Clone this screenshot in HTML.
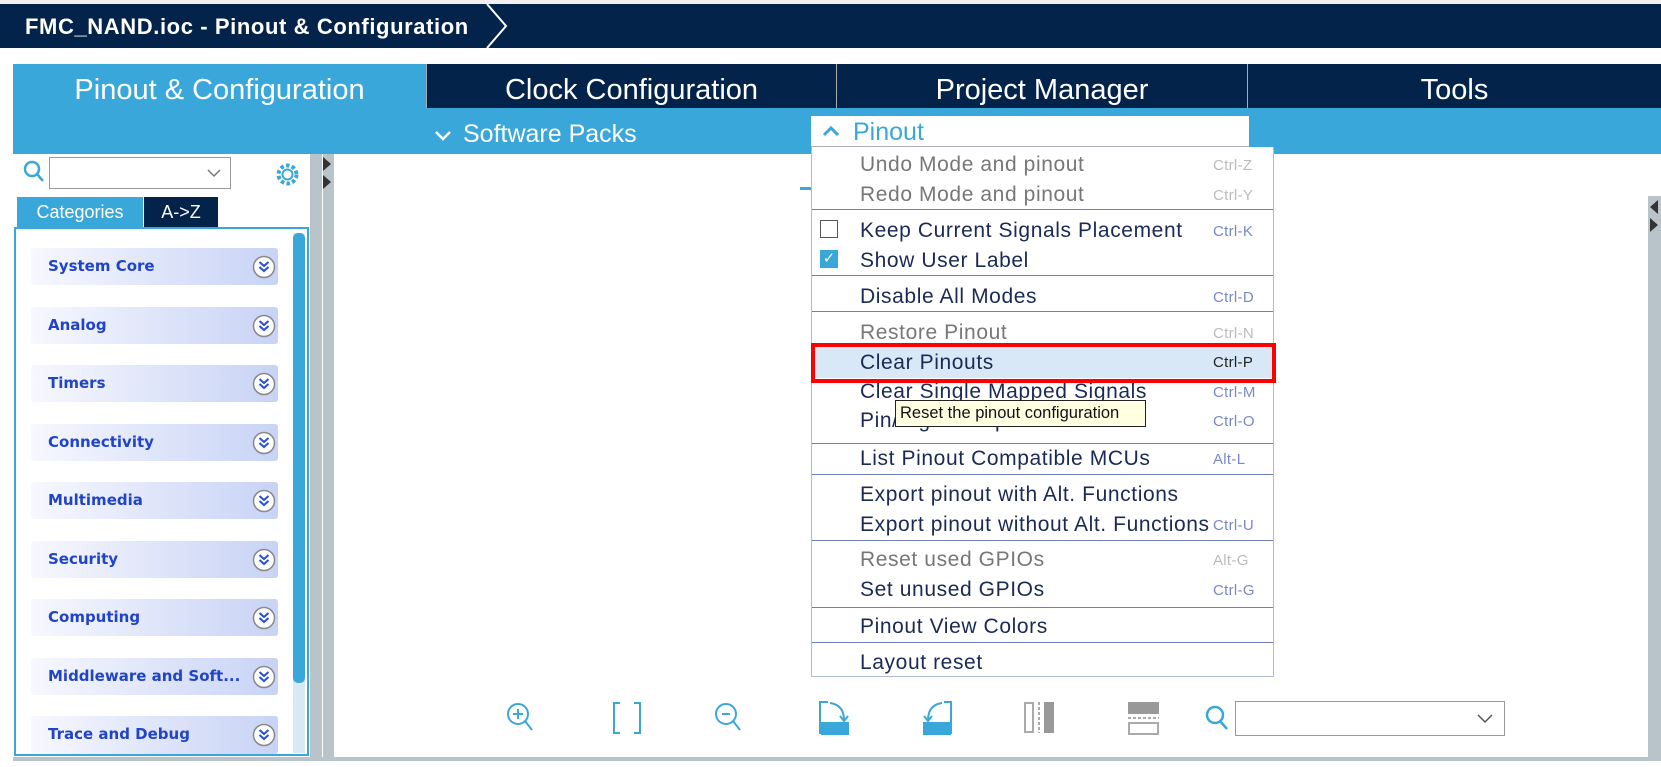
<!DOCTYPE html>
<html><head><style>
*{margin:0;padding:0;box-sizing:border-box}
body{width:1661px;height:767px;background:#fff;position:relative;overflow:hidden;font-family:"Liberation Sans",Arial,sans-serif}
.a{position:absolute}
.tab{position:absolute;top:64px;height:44px;color:#fff;font-size:29px;text-align:center;line-height:52px;background:#03234b}
.cat{position:absolute;left:31px;width:247px;height:37px;border-radius:3px;background:linear-gradient(90deg,#f7f8fe,#c8d3f5);font-family:"DejaVu Sans",sans-serif;font-weight:bold;font-size:15px;color:#2143c8;line-height:37px;padding-left:17px}
.cat svg{position:absolute;left:221px;top:7px}
.mi{position:absolute;left:860px;font-size:21px;letter-spacing:0.6px;color:#1b2a55;}
.g{color:#777}
.sc{position:absolute;left:1213px;font-size:15px;letter-spacing:0.3px;color:#7a88c8}
.sep{position:absolute;left:812px;width:461px;height:1px;background:#6f82b8}
</style></head><body>
<svg width="0" height="0" style="position:absolute"><defs><g id="dc"><circle cx="12" cy="12" r="10.5" stroke="#888" stroke-width="1.5" fill="#fff"/><path d="M7.5 7 L12 11 L16.5 7 M7.5 12 L12 16 L16.5 12" stroke="#2a4fd0" stroke-width="2" fill="none"/></g></defs></svg>
<div class="a" style="left:0;top:0;width:1661px;height:4px;background:#f0f0f0"></div>
<div class="a" style="left:0;top:4px;width:1661px;height:44px;background:#03234b"></div>
<div class="a" style="left:25px;top:14px;color:#fff;font-weight:bold;font-size:22px;letter-spacing:0.6px">FMC_NAND.ioc - Pinout &amp; Configuration</div>
<svg class="a" style="left:484px;top:4px" width="30" height="44"><path d="M3 0 L22 22 L3 44" stroke="#fff" stroke-width="2" fill="none"/></svg>
<div class="a" style="left:13px;top:64px;width:1648px;height:90px;background:#3aa7db"></div>
<div class="tab" style="left:13px;width:413px;background:#3aa7db">Pinout &amp; Configuration</div>
<div class="tab" style="left:426px;width:410px;border-left:1px solid #aaa">Clock Configuration</div>
<div class="tab" style="left:836px;width:411px;border-left:1px solid #aaa">Project Manager</div>
<div class="tab" style="left:1247px;width:414px;border-left:1px solid #aaa">Tools</div>
<svg class="a" style="left:434px;top:130px" width="18" height="12"><path d="M2 2 L9 9 L16 2" stroke="#fff" stroke-width="2.5" fill="none"/></svg>
<div class="a" style="left:463px;top:120px;color:#fff;font-size:25px">Software Packs</div>
<!-- sidebar -->
<svg class="a" style="left:23px;top:160px" width="24" height="26"><circle cx="9" cy="9" r="7" stroke="#3aa7db" stroke-width="2.5" fill="none"/><path d="M14 14 L20 21" stroke="#3aa7db" stroke-width="2.5"/></svg>
<div class="a" style="left:49px;top:157px;width:182px;height:32px;border:1px solid #999;background:#fff"></div>
<svg class="a" style="left:206px;top:168px" width="16" height="10"><path d="M2 2 L8 8 L14 2" stroke="#777" stroke-width="1.5" fill="none"/></svg>
<svg class="a" style="left:274px;top:161px" width="27" height="27"><circle cx="13.5" cy="13.5" r="9" stroke="#3aa7db" stroke-width="4" fill="none" stroke-dasharray="3.5 2.3"/><circle cx="13.5" cy="13.5" r="5" stroke="#3aa7db" stroke-width="2" fill="none"/></svg>
<div class="a" style="left:17px;top:197px;width:126px;height:30px;background:#3aa7db;color:#fff;font-size:18px;line-height:30px;text-align:center">Categories</div>
<div class="a" style="left:144px;top:197px;width:74px;height:30px;background:#03234b;color:#fff;font-size:18px;line-height:30px;text-align:center">A-&gt;Z</div>
<div class="a" style="left:14px;top:227px;width:295px;height:529px;border:2px solid #3aa7db;background:#fff"></div>
<div class="a" style="left:293px;top:233px;width:12px;height:520px;background:#d8e8f4"></div>
<div class="a" style="left:293px;top:233px;width:12px;height:450px;background:#3aa7db;border-radius:5px"></div>
<div class="cat" style="top:248px">System Core<svg width="24" height="24"><use href="#dc"/></svg></div>
<div class="cat" style="top:307px">Analog<svg width="24" height="24"><use href="#dc"/></svg></div>
<div class="cat" style="top:365px">Timers<svg width="24" height="24"><use href="#dc"/></svg></div>
<div class="cat" style="top:424px">Connectivity<svg width="24" height="24"><use href="#dc"/></svg></div>
<div class="cat" style="top:482px">Multimedia<svg width="24" height="24"><use href="#dc"/></svg></div>
<div class="cat" style="top:541px">Security<svg width="24" height="24"><use href="#dc"/></svg></div>
<div class="cat" style="top:599px">Computing<svg width="24" height="24"><use href="#dc"/></svg></div>
<div class="cat" style="top:658px">Middleware and Soft...<svg width="24" height="24"><use href="#dc"/></svg></div>
<div class="cat" style="top:716px;height:38px">Trace and Debug<svg width="24" height="24"><use href="#dc"/></svg></div>
<div class="a" style="left:310px;top:154px;width:12px;height:606px;background:#b9c4ca"></div>
<div class="a" style="left:323px;top:154px;width:11px;height:606px;background:#b9c4ca"></div>
<svg class="a" style="left:322px;top:157px" width="12" height="40"><path d="M1 0 L9 7 L1 14 Z M1 18 L9 25 L1 32 Z" fill="#333"/></svg>
<div class="a" style="left:13px;top:757px;width:1648px;height:4px;background:#b9c4ca"></div>
<div class="a" style="left:1648px;top:196px;width:13px;height:564px;background:#b9c4ca"></div>
<svg class="a" style="left:1649px;top:200px" width="12" height="40"><path d="M9 0 L1 7 L9 14 Z M1 18 L9 25 L1 32 Z" fill="#333"/></svg>
<div class="a" style="left:800px;top:187px;width:11px;height:3px;background:#3aa7db"></div>
<!-- menu -->
<div class="a" style="left:811px;top:116px;width:438px;height:31px;background:#fff;border-bottom:1px solid #aab"></div>
<svg class="a" style="left:822px;top:125px" width="18" height="12"><path d="M2 10 L9 3 L16 10" stroke="#3aa7db" stroke-width="3" fill="none"/></svg>
<div class="a" style="left:853px;top:118px;color:#3aa7db;font-size:25px">Pinout</div>
<div class="a" style="left:811px;top:147px;width:463px;height:530px;background:#fff;border:1px solid #b0bcd0;border-top:none"></div>
<div class="a" style="left:812px;top:346px;width:461px;height:32px;background:#d8e8f6"></div>
<div class="mi g" style="top:153px">Undo Mode and pinout</div><div class="sc" style="top:157px;color:#bbb">Ctrl-Z</div>
<div class="mi g" style="top:183px">Redo Mode and pinout</div><div class="sc" style="top:187px;color:#bbb">Ctrl-Y</div>
<div class="sep" style="top:209px"></div>
<div class="a" style="left:820px;top:220px;width:18px;height:18px;border:1.5px solid #555"></div>
<div class="mi" style="top:219px">Keep Current Signals Placement</div><div class="sc" style="top:223px">Ctrl-K</div>
<div class="a" style="left:820px;top:250px;width:18px;height:18px;background:#3aa7db;color:#fff;font-size:15px;text-align:center;line-height:18px">&#10003;</div>
<div class="mi" style="top:249px">Show User Label</div>
<div class="sep" style="top:275px"></div>
<div class="mi" style="top:285px">Disable All Modes</div><div class="sc" style="top:289px">Ctrl-D</div>
<div class="sep" style="top:311px"></div>
<div class="mi g" style="top:321px">Restore Pinout</div><div class="sc" style="top:325px;color:#bbb">Ctrl-N</div>
<div class="mi" style="top:351px">Clear Pinouts</div><div class="sc" style="top:354px;color:#222">Ctrl-P</div>
<div class="mi" style="top:380px">Clear Single Mapped Signals</div><div class="sc" style="top:384px">Ctrl-M</div>
<div class="mi" style="top:409px">Pin/Signals Options...</div><div class="sc" style="top:413px">Ctrl-O</div>
<div class="sep" style="top:443px"></div>
<div class="mi" style="top:447px">List Pinout Compatible MCUs</div><div class="sc" style="top:451px">Alt-L</div>
<div class="sep" style="top:474px"></div>
<div class="mi" style="top:483px">Export pinout with Alt. Functions</div>
<div class="mi" style="top:513px">Export pinout without Alt. Functions</div><div class="sc" style="top:517px">Ctrl-U</div>
<div class="sep" style="top:540px"></div>
<div class="mi g" style="top:548px">Reset used GPIOs</div><div class="sc" style="top:552px;color:#bbb">Alt-G</div>
<div class="mi" style="top:578px">Set unused GPIOs</div><div class="sc" style="top:582px">Ctrl-G</div>
<div class="sep" style="top:607px"></div>
<div class="mi" style="top:615px">Pinout View Colors</div>
<div class="sep" style="top:642px"></div>
<div class="mi" style="top:651px">Layout reset</div>
<div class="a" style="left:811px;top:343px;width:465px;height:40px;border:4px solid #f00"></div>
<div class="a" style="left:895px;top:400px;width:251px;height:27px;background:#ffffe1;border:1px solid #222;font-size:16.5px;line-height:25px;padding-left:4px;color:#111;white-space:nowrap">Reset the pinout configuration</div>
<!-- toolbar -->
<svg class="a" style="left:505px;top:700px" width="34" height="36"><circle cx="13" cy="14" r="10" stroke="#3aa7db" stroke-width="2" fill="none"/><path d="M20 21 L27 30 M13 9 V19 M8 14 H18" stroke="#3aa7db" stroke-width="2"/></svg>
<svg class="a" style="left:612px;top:702px" width="30" height="32"><path d="M8 1 H2 V31 H8 M22 1 H28 V31 H22" stroke="#3aa7db" stroke-width="2" fill="none"/></svg>
<svg class="a" style="left:713px;top:700px" width="34" height="36"><circle cx="13" cy="14" r="10" stroke="#3aa7db" stroke-width="2" fill="none"/><path d="M20 21 L27 30 M9 14 H17" stroke="#3aa7db" stroke-width="2"/></svg>
<svg class="a" style="left:818px;top:700px" width="34" height="36"><path d="M2 34 V2 H10" stroke="#3aa7db" stroke-width="2" fill="none"/><rect x="3" y="22" width="28" height="13" fill="#3aa7db"/><path d="M12 3 Q26 5 26 20 M22 16 L26 21 L30 16" stroke="#3aa7db" stroke-width="2" fill="none"/></svg>
<svg class="a" style="left:920px;top:700px" width="34" height="36"><path d="M31 34 V2 H24" stroke="#3aa7db" stroke-width="2" fill="none"/><rect x="3" y="22" width="28" height="13" fill="#3aa7db"/><path d="M22 3 Q8 5 8 20 M4 16 L8 21 L12 16" stroke="#3aa7db" stroke-width="2" fill="none"/></svg>
<svg class="a" style="left:1024px;top:702px" width="32" height="32"><rect x="1" y="1" width="8" height="29" fill="none" stroke="#aaa" stroke-width="2"/><rect x="20" y="0" width="10" height="31" fill="#999"/><path d="M15 0 V31" stroke="#aaa" stroke-width="2" stroke-dasharray="3 2"/></svg>
<svg class="a" style="left:1128px;top:702px" width="32" height="34"><rect x="0" y="0" width="31" height="12" fill="#999"/><path d="M0 16 H31" stroke="#aaa" stroke-width="2" stroke-dasharray="3 2"/><rect x="1" y="21" width="29" height="11" fill="none" stroke="#aaa" stroke-width="2"/></svg>
<svg class="a" style="left:1204px;top:704px" width="26" height="28"><circle cx="11" cy="11" r="8" stroke="#3aa7db" stroke-width="2.5" fill="none"/><path d="M16 17 L23 25" stroke="#3aa7db" stroke-width="2.5"/></svg>
<div class="a" style="left:1235px;top:701px;width:270px;height:35px;border:1px solid #999;background:#fff"></div>
<svg class="a" style="left:1476px;top:713px" width="18" height="12"><path d="M2 2 L9 9 L16 2" stroke="#555" stroke-width="1.5" fill="none"/></svg>
</body></html>
